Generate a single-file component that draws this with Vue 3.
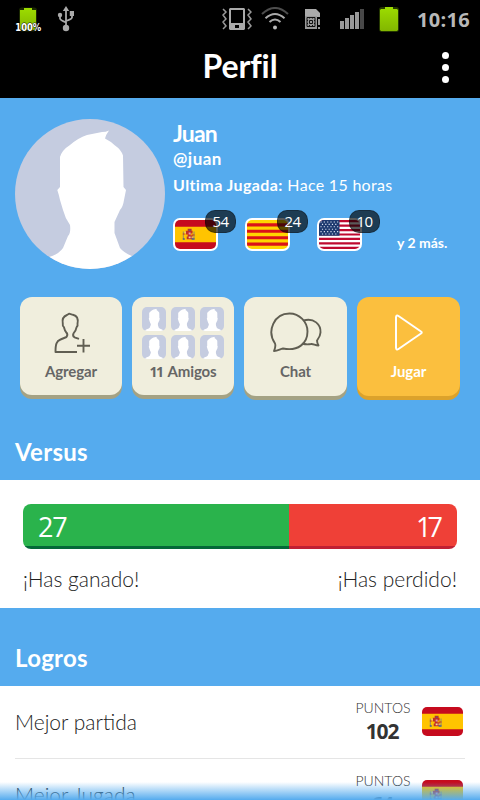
<script setup>
const flags = [
  { code: 'es', count: 54 },
  { code: 'cat', count: 24 },
  { code: 'us', count: 10 },
]
const wins = 27
const losses = 17
const winShare = (wins / (wins + losses)) * 100
const achievements = [
  { name: 'Mejor partida', points: 102 },
  { name: 'Mejor Jugada', points: 64 },
]
</script>

<template>
  <main class="screen">
    <svg class="sprite" aria-hidden="true">
      <symbol id="flag-es" viewBox="0 0 42 30" preserveAspectRatio="none">
        <path fill="#c60b1e" d="M0 0h42v30H0z" />
        <path fill="#ffc400" d="M0 7h42v16H0z" />
        <path fill="#8f8a6a" d="M8 12h1v8H8zM19 12h1v8h-1z" />
        <path fill="#c22f25" d="M11 11h2V9h4v2h1v3h-2v2h2v4h-6v-3h1v-2h-2zM8 14h2v1H8zM17 15h3v1h-3z" />
        <path fill="#ead7a0" d="M10 12h1v2h-1zM14 17h2v2h-2zM17 17h1v2h-1z" />
        <path fill="#4b5f91" d="M14 10h2v1h-2zM8 19h2v1.500H8zM17 19h3v1.500h-3z" />
        <path fill="#e39ab0" d="M14 13h2v2h-2z" />
      </symbol>
      <symbol id="flag-cat" viewBox="0 0 42 30" preserveAspectRatio="none">
        <path fill="#ffd500" d="M0 0h42v30H0z" />
        <path fill="#da121a" d="M0 3.3h42v3.4H0zM0 10h42v3.3H0zM0 16.7h42V20H0zM0 23.3h42v3.4H0z" />
      </symbol>
      <symbol id="flag-us" viewBox="0 0 42 30" preserveAspectRatio="none">
        <path fill="#fff" d="M0 0h42v30H0z" />
        <path stroke="#bf0a30" stroke-width="2.31" d="M0 1.15h42M0 5.77h42M0 10.38h42M0 15h42M0 19.62h42M0 24.23h42M0 28.85h42" />
        <path fill="#1d3a70" d="M0 0h21v16.2H0z" />
        <path stroke="#dbe2ef" stroke-width="1.1" stroke-dasharray="1.2 2.2" d="M1.5 2h19M3 4.5h17M1.5 7h19M3 9.5h17M1.5 12h19M3 14.5h17" />
      </symbol>
      <symbol id="person" viewBox="0 0 150 150">
        <path fill="#c5cce0" d="M0 0h150v150H0z" />
        <path fill="#fff" d="M18 150q4-8 16-12 10-3 14-9l5-12q3-3 2-11-5-7-7-15l-3-10q-1-5-2.700-10l2.700-3V38q2-7 10-12 8-7 17-10l15-3q4 0 7-1.500-3 4-4 8 6 3 10 7 6 4 8 10l.5 31.500 2.500 3-2 10q-1 7-4 10l-5.500 12v11l5.500 15q4 5 13 8.500 12 4 16 12.500z" />
      </symbol>
    </svg>

    <header class="top">
      <div class="status">
        <svg class="batt-small" viewBox="0 0 30 28">
          <defs>
            <linearGradient id="juice" x1="0" y1="0" x2="0" y2="1">
              <stop offset="0" stop-color="#9ddd00" /><stop offset="1" stop-color="#82b600" />
            </linearGradient>
          </defs>
          <rect x="5" y="2.5" width="18" height="24" rx="3" fill="#3c5a00" opacity=".45" />
          <path fill="url(#juice)" d="M6 5h4V3h8v2h4v20H6z" />
          <text x="14.3" y="25.8" text-anchor="middle" textLength="26" lengthAdjust="spacingAndGlyphs">100%</text>
        </svg>
        <svg class="usb" viewBox="0 0 18 26">
          <g fill="none" stroke="#aaa" stroke-width="1.8">
            <path d="M9 4v18M3 9v3.5q0 1.5 6 4M15 8v3.5q0 1.5-6 3.5" />
          </g>
          <path fill="#aaa" d="M9 0l3.2 5H5.8zM12.8 5H17v5h-4.2z" />
          <circle cx="3" cy="9" r="2.2" fill="#aaa" /><circle cx="9" cy="22" r="3.2" fill="#aaa" />
        </svg>
        <svg class="vibrate" viewBox="0 0 30 24">
          <path fill="#aaa" fill-rule="evenodd" d="M8 1h14l1 1v20l-1 1H8l-1-1V2zM9 3v13h12V3zM13 18v3h4v-3z" />
          <path fill="none" stroke="#999" stroke-width="1.5" d="M1 2l3 3-3 3 3 4-3 3 3 4-3 3M26 2l3 3-3 3 3 4-3 3 3 4-3 3" />
        </svg>
        <svg class="wifi" viewBox="0 0 28 24">
          <g fill="none" stroke-width="2">
            <path stroke="#4d4d4d" d="M1 7q13-12 26 0" />
            <path stroke="#aaa" d="M4.5 11.3q9.500-8.600 19 0M8.500 15q5.500-5 11 0" />
          </g>
          <circle cx="14" cy="20.500" r="2" fill="#bbb" />
        </svg>
        <svg class="sim" viewBox="0 0 16 22">
          <path fill="#aaa" d="M0 1h11l4 4v4H0z" />
          <path fill="#999" d="M0 8h12v13H0zM13 11h2v6h-2zM13 19h2v2h-2z" />
          <path fill="none" stroke="#111" d="M2 9.500h8v9H2zM4.500 12.500h3v3h-3zM2 12.500h1M9 12.500h1M2 15.500h1M9 15.500h1M4.500 9.500v1M7.500 9.500v1M4.500 18v-1M7.500 18v-1" />
        </svg>
        <svg class="signal" viewBox="0 0 25 22">
          <path fill="#999" d="M0 13h4v8H0zM5 10h4v11H5zM10 7h4v14h-4zM15 4h4v17h-4z" />
          <path fill="#484848" d="M20 1h4v20h-4z" />
        </svg>
        <svg class="batt" viewBox="0 0 22 28">
          <rect x="1" y="2" width="20" height="25" rx="3" fill="#4a7000" opacity=".5" />
          <path fill="url(#juice)" d="M3 4h4V2h8v2h4l1 1v20l-1 1H3l-1-1V5z" />
        </svg>
        <time class="clock">10:16</time>
      </div>
      <div class="titlebar">
        <h1>Perfil</h1>
        <div class="menu"><i></i><i></i><i></i></div>
      </div>
    </header>

    <section class="profile">
      <svg class="avatar"><use href="#person" /></svg>
      <div class="info">
        <h2>Juan</h2>
        <p class="handle">@juan</p>
        <p class="last"><b>Ultima Jugada:</b> <span>Hace 15 horas</span></p>
        <div class="flags">
          <div v-for="f in flags" :key="f.code" class="lang">
            <svg class="flag"><use :href="'#flag-' + f.code" /></svg>
            <span class="count">{{ f.count }}</span>
          </div>
          <span class="more">y 2 más.</span>
        </div>
      </div>
    </section>

    <nav class="actions">
      <button class="card">
        <svg class="icon" viewBox="1 0 44 44">
          <path fill="none" stroke="#605e52" stroke-width="1.9" stroke-linejoin="round" d="M29 40H7.500c0-8 1-11 5-12.500l6-2.500c1.500-2 1-3.500-.5-5-1.500-1.700-1.500-3-2-4.800-1.500-1-1.500-2-1.200-3.400-1-5 .7-7.500 4.200-8.800L21 1.700l4 1.100c4 .9 5.500 4 4.500 9 .5 1.500 0 2.500-1 3.500-.5 3-1.500 4.500-3 6-.7 1.500-.5 3 1 4l4.500 1.500M35.500 27v13.500M29 33.800h13" />
        </svg>
        <span>Agregar</span>
      </button>
      <button class="card">
        <div class="friends"><svg v-for="n in 6" :key="n"><use href="#person" /></svg></div>
        <span><b class="num">11</b> Amigos</span>
      </button>
      <button class="card tall">
        <svg class="icon chat" viewBox="0 0 54 44">
          <g fill="none" stroke="#605e52" stroke-width="1.9" stroke-linejoin="round">
            <path d="M6 31.500C-2.500 19 5 1.500 20.500 1.500c10 0 18 8.500 18 18 0 12-9.500 20-24.500 17-3 .6-5 2-9 2.500 1.500-3.500 2-5 1-7.500z" />
            <path d="M34.500 8.500C45 5.500 52 12.500 51.500 20.500c-.2 4-2 6-3.500 8 0 2 .5 3 1.500 5-3.500-.3-5.500-2-7.500-1.500-4 .8-6 .5-8.500-.5" />
          </g>
        </svg>
        <span>Chat</span>
      </button>
      <button class="card tall play">
        <svg class="icon" viewBox="1 0 44 44">
          <path fill="none" stroke="#fff" stroke-width="2" stroke-linejoin="round" d="M10 6.500c0-2 1-2.500 2.500-1.500L35 20.500q1.500 1 0 2L12.500 38c-1.500 1-2.500.500-2.500-1.500z" />
        </svg>
        <span>Jugar</span>
      </button>
    </nav>

    <h3 class="section versus-title">Versus</h3>
    <section class="versus">
      <div class="bar">
        <div class="won" :style="{ width: winShare + '%' }"><span>{{ wins }}</span></div>
        <div class="lost"><span>{{ losses }}</span></div>
      </div>
      <div class="captions"><span>¡Has ganado!</span><span>¡Has perdido!</span></div>
    </section>

    <h3 class="section logros-title">Logros</h3>
    <section class="logros">
      <div v-for="a in achievements" :key="a.name" class="row">
        <span class="name">{{ a.name }}</span>
        <div class="points"><small>PUNTOS</small><strong>{{ a.points }}</strong></div>
        <svg class="row-flag"><use href="#flag-es" /></svg>
      </div>
    </section>
    <div class="fade"></div>
  </main>
</template>

<style>
body { margin: 0; background: #55abee; }
</style>

<style scoped>
* { box-sizing: border-box; }
.screen { position: relative; width: 480px; height: 800px; overflow: hidden; background: #55abee; font-family: Lato, "Open Sans", sans-serif; color: #222; }
.sprite { position: absolute; width: 0; height: 0; }
svg { display: block; flex: none; }
h1, h2, h3, p { margin: 0; white-space: nowrap; }
.top { height: 98px; background: #000; }
.status { display: flex; height: 38px; padding-left: 14px; padding-top: 6px; align-items: flex-start; }
.batt-small { width: 30px; height: 28px; margin-top: -1px; overflow: visible; }
.batt-small text { font: bold 10px "DejaVu Sans", sans-serif; fill: #fff; stroke: #000; stroke-width: 1px; paint-order: stroke; }
.usb { width: 18px; height: 26px; margin-left: 13px; }
.vibrate { width: 30px; height: 24px; margin: 1px 0 0 147px; }
.wifi { width: 28px; height: 24px; margin: 1px 0 0 9px; }
.sim { width: 16px; height: 22px; margin: 2px 0 0 16px; }
.signal { width: 25px; height: 22px; margin: 2px 0 0 19px; }
.batt { width: 22px; height: 28px; margin: -1px 0 0 13px; }
.clock { margin-left: 17px; font: bold 20px/27px "Open Sans", sans-serif; color: #b8b8b8; letter-spacing: .3px; }
.titlebar { display: grid; grid-template-columns: 1fr auto 1fr; height: 60px; align-items: center; }
h1 { grid-column: 2; margin-top: -5px; color: #fff; font: 700 32px/50px Lato, sans-serif; letter-spacing: -.1px; }
.menu { justify-self: end; display: grid; gap: 5px; margin: -1px 31px 0 0; }
.menu i { width: 7px; height: 7px; border-radius: 50%; background: #fff; }
.profile { display: flex; height: 199px; padding: 21px 0 0 15px; color: #fff; }
.avatar { width: 150px; height: 150px; border-radius: 50%; }
.info { padding-left: 8px; }
h2 { font: 700 23px/28px Lato, sans-serif; letter-spacing: -.8px; }
.handle { font: 700 17px/24px Lato, sans-serif; letter-spacing: .5px; }
.last { font-size: 16px; line-height: 28px; letter-spacing: .4px; }
.last span { font-weight: 400; letter-spacing: .3px; }
.flags { display: flex; margin-top: 19px; }
.lang { position: relative; width: 72px; height: 33px; }
.flag { width: 45px; height: 33px; border: 2px solid #fff; border-radius: 7px; background: #fff; }
.count { position: absolute; left: 32px; top: -8px; width: 31px; height: 23px; border-radius: 10px; background: rgba(0, 0, 0, .65); border: 1px solid rgba(0, 0, 0, .25); font: 400 15px/21px "Open Sans", sans-serif; letter-spacing: -.5px; text-align: center; }
.more { margin: 15px 0 0 8px; font-size: 14px; line-height: 20px; font-weight: 700; }
.actions { display: grid; grid-template-columns: 102px 102px 103px 103px; gap: 10px; padding: 0 20px; height: 103px; align-items: start; }
.card { display: flex; flex-direction: column; align-items: center; height: 98px; min-width: 0; padding: 10px 0 0; border: 0; border-radius: 12px; background: #f0eedd; box-shadow: 0 4px #a4a284; color: #666; font: 700 15px/20px Lato, sans-serif; letter-spacing: -.1px; }
.card.tall { height: 99px; }
.card.play { background: #fbbf3e; box-shadow: 0 4px #dca22b; color: #fff; }
.card > span { margin-top: auto; margin-bottom: 14px; white-space: nowrap; }
.card.tall > span { margin-bottom: 15px; }
.num { margin-right: 2px; font: 700 14px/1 "Open Sans", sans-serif; letter-spacing: -1.5px; }
.icon { width: 44px; height: 44px; margin-top: 5px; }
.chat { width: 54px; }
.play .icon { margin-top: 4px; }
.friends { display: grid; grid-template-columns: repeat(3, 24px); gap: 4px 5px; }
.friends svg { width: 24px; height: 24px; border-radius: 5px; }
.section { color: #fff; padding-left: 15px; font: 700 24px/32px Lato, sans-serif; }
.versus-title { height: 80px; padding-top: 36px; letter-spacing: .3px; }
.versus { height: 128px; padding: 24px 23px 0; background: #fff; }
.bar { display: flex; height: 45px; border-radius: 8px; overflow: hidden; color: #fff; font: 400 27px/45px "Open Sans", sans-serif; letter-spacing: -1.2px; }
.won, .lost { height: 45px; }
.won { background: linear-gradient(#2ab34c 42px, #046838 42px); padding-left: 15px; }
.lost { flex: 1; background: linear-gradient(#ef4037 42px, #c02033 42px); text-align: right; padding-right: 13px; }
.lost span { letter-spacing: -4px; padding-right: 5px; }
.captions { display: flex; justify-content: space-between; margin-top: 16px; font-size: 21px; line-height: 28px; font-weight: 300; }
.logros-title { height: 78px; padding-top: 34px; letter-spacing: .3px; }
.logros { background: #fff; padding: 0 15px; height: 114px; overflow: hidden; }
.row { display: flex; align-items: flex-start; height: 73px; border-bottom: 1px solid #e5e5e5; }
.name { flex: 1; padding-top: 22px; font-size: 21px; line-height: 28px; font-weight: 300; }
.points { width: 60px; padding-top: 13px; margin-right: 9px; text-align: center; }
.points small, .points strong { display: block; }
.points small { font-size: 14px; line-height: 18px; font-weight: 300; color: #333; }
.points strong { margin-left: -2px; font: 700 21px/28px "Open Sans", sans-serif; letter-spacing: -1.2px; color: #333; }
.row-flag { width: 41px; height: 29px; margin: 21px 2px 0 0; border-radius: 5px; }
.fade { position: absolute; left: 0; right: 0; bottom: 0; height: 18px; background: linear-gradient(rgba(85, 171, 238, 0), #55abee); }
</style>
